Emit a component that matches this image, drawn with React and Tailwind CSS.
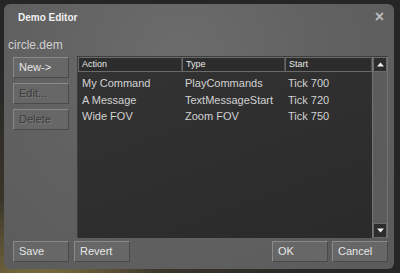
import React from 'react';

const filas = [
  { accion: 'My Command', tipo: 'PlayCommands', inicio: 'Tick 700' },
  { accion: 'A Message', tipo: 'TextMessageStart', inicio: 'Tick 720' },
  { accion: 'Wide FOV', tipo: 'Zoom FOV', inicio: 'Tick 750' },
];

// boton estilo consola
function Boton({ texto, ancho = 'w-[56px]', deshabilitado = false }) {
  return (
    <div
      className={`${ancho} h-[21px] flex items-center pl-[5px] text-[11px] bg-[#676767] border border-t-[#8a8a8a] border-l-[#8a8a8a] border-r-[#4a4a4a] border-b-[#4a4a4a] ${
        deshabilitado ? 'text-[#3c3c3c] [text-shadow:1px_1px_0_#7a7a7a]' : 'text-[#e6e6e6]'
      }`}
    >
      {texto}
    </div>
  );
}

export default function App() {
  return (
    <div
      className="w-[400px] h-[273px] p-[4px] pr-[6px] bg-[#262626] bg-[radial-gradient(ellipse_at_10%_110%,#8a7a44_0%,#3a352a_25%,#262626_55%)] overflow-hidden"
      style={{ fontFamily: '"Liberation Sans", Arial, sans-serif' }}
    >
      <div className="w-[390px] h-[265px] rounded-[6px] bg-[#5f5f5f] bg-[radial-gradient(ellipse_at_45%_20%,#6c6c6c_0%,#616161_50%,#5a5a5a_100%)] flex flex-col">
        {/* titulo */}
        <div className="h-[26px] flex items-center justify-between pl-[14px] pr-[10px]">
          <span className="text-[10px] font-bold text-[#f0f0f0]">Demo Editor</span>
          <span className="text-[16px] font-bold text-[#bdbdbd] leading-none">×</span>
        </div>
        <div className="h-[26px] flex items-end pb-[4px] pl-[4px]">
          <span className="text-[12px] leading-[14px] text-[#cfcfcf]">circle.dem</span>
        </div>

        {/* cuerpo */}
        <div className="h-[182px] flex pl-[9px] gap-[8px]">
          <div className="flex flex-col gap-[5px] pt-[1px]">
            <Boton texto="New->" />
            <Boton texto="Edit..." deshabilitado />
            <Boton texto="Delete" deshabilitado />
          </div>

          <div className="w-[311px] h-[182px] flex bg-[#2f2f2f] bg-[linear-gradient(160deg,#333333,#2a2a2a)] border-l border-t border-[#3d3d3d]">
            <div className="flex-1 flex flex-col">
              <div className="h-[15px] flex text-[9px] text-[#e8e8e8] bg-[#2c2c2c]">
                <div className="w-[104px] pl-[3px] flex items-center border border-[#6a6a6a] border-r-[#505050]">Action</div>
                <div className="w-[103px] pl-[3px] flex items-center border border-[#6a6a6a] border-r-[#505050]">Type</div>
                <div className="flex-1 pl-[3px] flex items-center border border-[#6a6a6a] border-r-[#505050]">Start</div>
              </div>
              <div className="pt-[3px]">
                {filas.map((f) => (
                  <div key={f.accion} className="h-[16.5px] flex items-center text-[11px] text-[#d2d2d2]">
                    <div className="w-[104px] pl-[4px]">{f.accion}</div>
                    <div className="w-[103px] pl-[3px]">{f.tipo}</div>
                    <div className="flex-1 pl-[3px]">{f.inicio}</div>
                  </div>
                ))}
              </div>
            </div>
            {/* barra de desplazamiento */}
            <div className="w-[16px] flex flex-col bg-[#5c5c5c] border-l border-r border-[#747474]">
              <div className="h-[15px] bg-[#2c2c2c] border border-[#6a6a6a] flex items-center justify-center">
                <svg width="7" height="5" viewBox="0 0 7 5"><path d="M3.5 0.5L7 4.5H0Z" fill="#f0f0f0" /></svg>
              </div>
              <div className="flex-1" />
              <div className="h-[15px] bg-[#2c2c2c] border border-[#6a6a6a] flex items-center justify-center">
                <svg width="7" height="5" viewBox="0 0 7 5"><path d="M0 0.5H7L3.5 4.5Z" fill="#f0f0f0" /></svg>
              </div>
            </div>
          </div>
        </div>

        {/* botones inferiores */}
        <div className="mt-[3px] flex pl-[9px] pr-[6px]">
          <div className="flex gap-[5px]">
            <Boton texto="Save" />
            <Boton texto="Revert" />
          </div>
          <div className="ml-auto flex gap-[4px]">
            <Boton texto="OK" />
            <Boton texto="Cancel" />
          </div>
        </div>
      </div>
    </div>
  );
}
